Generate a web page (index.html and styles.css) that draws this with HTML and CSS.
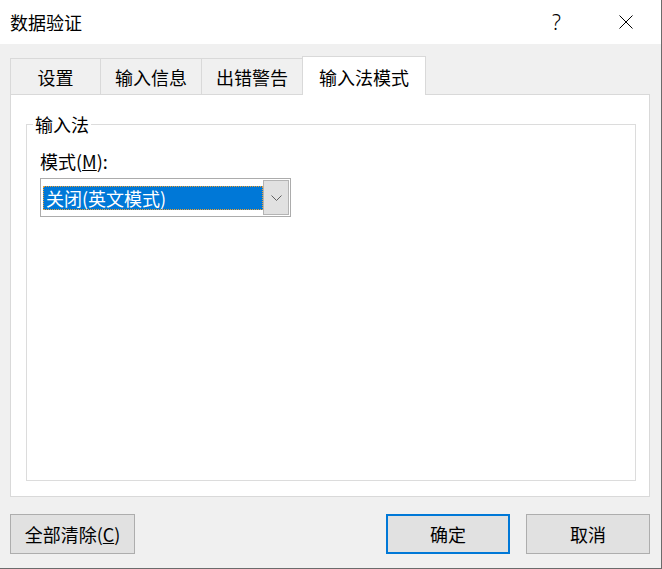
FILE: index.html
```html
<!DOCTYPE html>
<html lang="zh-CN">
<head>
  <meta charset="UTF-8" />
  <meta name="viewport" content="width=device-width, initial-scale=1.0"/>
  <title>数据验证</title>
  <link rel="stylesheet" href="styles.css">
</head>
<body>
  <div class="window">
    <header class="titlebar">
      <span class="title">数据验证</span>
      <div class="caption">
        <span class="cap-btn help">?</span>
        <span class="cap-btn close">
          <svg width="14" height="14" viewBox="0 0 14 14">
            <path d="M0.5 0.5 L13.5 13.5 M13.5 0.5 L0.5 13.5" stroke="#000" stroke-width="1" fill="none"/>
          </svg>
        </span>
      </div>
    </header>

    <main class="body">
      <div class="tabs">
        <div class="tab first">设置</div>
        <div class="tab">输入信息</div>
        <div class="tab">出错警告</div>
        <div class="tab active">输入法模式</div>
      </div>

      <div class="panel">
        <fieldset class="group">
          <legend>输入法</legend>
          <div class="field">
            <label class="field-label">模式(<u>M</u>):</label>
            <div class="combo">
              <span class="combo-value">关闭(英文模式)</span>
              <span class="combo-btn">
                <svg width="11" height="6" viewBox="0 0 11 6">
                  <polyline points="0.5,0.5 5.5,5.5 10.5,0.5" stroke="#606060" stroke-width="1" fill="none"/>
                </svg>
              </span>
            </div>
          </div>
        </fieldset>
      </div>

      <div class="footer">
        <button class="btn wide">全部清除(<u>C</u>)</button>
        <div class="footer-right">
          <button class="btn default">确定</button>
          <button class="btn">取消</button>
        </div>
      </div>
    </main>
  </div>
</body>
</html>
```

FILE: styles.css
```css
body {
  margin: 0;
  padding: 0;
  font-family: "Noto Sans CJK SC", "Noto Sans", sans-serif;
  font-size: 18px;
  color: #000;
  background: #f0f0f0;
}
.window {
  width: 661px;
  height: 568px;
  border-right: 1px solid #6b6b6b;
  border-bottom: 1px solid #6b6b6b;
  background: #f0f0f0;
}
.titlebar {
  height: 44px;
  background: #fff;
  display: flex;
  align-items: center;
  padding-left: 10px;
}
.title {
  line-height: 24px;
  flex: 1;
}
.caption {
  display: flex;
  height: 44px;
}
.cap-btn {
  display: flex;
  align-items: center;
  justify-content: center;
  height: 44px;
}
.help {
  width: 67px;
  font-family: "Noto Sans", sans-serif;
  font-weight: 300;
  font-size: 21px;
  padding-bottom: 1px;
  box-sizing: border-box;
}
.close {
  width: 71px;
}

.body {
  padding: 0 11px 0 10px;
}
.tabs {
  display: flex;
  align-items: flex-end;
  margin-top: 12px;
  height: 38px;
}
.tab {
  height: 36px;
  box-sizing: border-box;
  padding: 1px 14px 0;
  line-height: 34px;
  text-align: center;
  border: 1px solid #d9d9d9;
  border-bottom: none;
  margin-left: -1px;
  background: #f0f0f0;
}
.tab.first {
  margin-left: 0;
  min-width: 91px;
}
.tab.active {
  position: relative;
  z-index: 1;
  height: 39px;
  padding: 2px 16px 0;
  line-height: 36px;
  margin-bottom: -1px;
  background: #fff;
}
.panel {
  height: 403px;
  box-sizing: border-box;
  border: 1px solid #d9d9d9;
  background: #fff;
  display: flex;
  flex-direction: column;
}
.group {
  flex: 1;
  margin: 17px 13px 15px 15px;
  padding: 0 0 0 6px;
  border: 1px solid #dcdcdc;
  min-width: 0;
}
.group legend {
  padding: 0 2px;
  line-height: 24px;
}
.field {
  padding-left: 7px;
  margin-top: 13px;
}
.field-label {
  display: block;
  line-height: 24px;
}
.combo {
  margin-top: 5px;
  width: 251px;
  height: 39px;
  box-sizing: border-box;
  border: 1px solid #acacac;
  padding: 1px;
  display: flex;
  align-items: center;
  background: #fff;
}
.combo-value {
  flex: 1;
  height: 24px;
  box-sizing: border-box;
  margin-left: 1px;
  padding-left: 2px;
  line-height: 22px;
  background: #0078d7;
  color: #fff;
  border: 1px dotted #f0a030;
}
.combo-btn {
  width: 26px;
  height: 35px;
  box-sizing: border-box;
  border: 1px solid #b4b4b4;
  background: #e1e1e1;
  display: flex;
  align-items: center;
  justify-content: center;
}

.footer {
  display: flex;
  margin-top: 17px;
}
.footer-right {
  display: flex;
  gap: 16px;
  margin-left: auto;
}
.btn {
  width: 124px;
  height: 40px;
  box-sizing: border-box;
  border: 1px solid #adadad;
  background: #e1e1e1;
  font-family: "Noto Sans CJK SC", "Noto Sans", sans-serif;
  font-size: 18px;
  color: #000;
  padding: 0;
  line-height: 24px;
}
.btn.wide {
  width: 125px;
}
.btn.default {
  border: 2px solid #0078d7;
}
```
